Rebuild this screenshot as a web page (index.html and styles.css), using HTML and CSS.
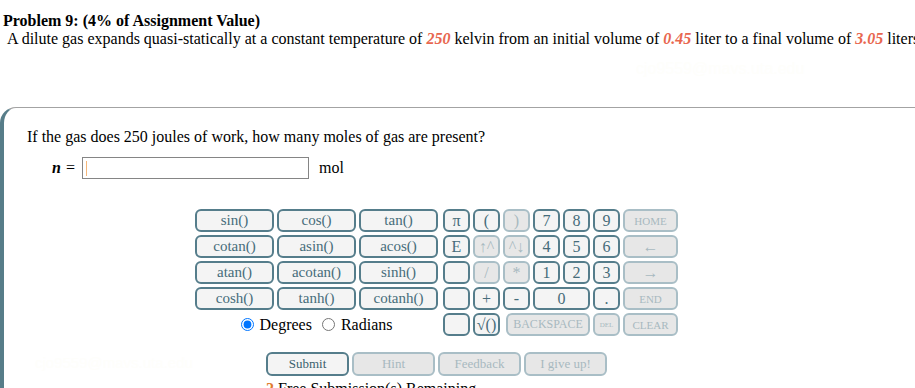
FILE: index.html
```html
<!DOCTYPE html>
<html lang="en">
<head>
    <meta charset="UTF-8">
    <meta name="viewport" content="width=device-width, initial-scale=1.0">
    <title>Problem 9</title>
    <link rel="stylesheet" href="styles.css">
</head>
<body>
    <div class="problem-head">
        <div class="problem-title">Problem 9: (4% of Assignment Value)</div>
        <div class="problem-text">A dilute gas expands quasi-statically at a constant temperature of <span class="var">250</span> kelvin from an initial volume of <span class="var">0.45</span> liter to a final volume of <span class="var">3.05</span> liters.</div>
    </div>

    <div class="part">
        <div class="question">If the gas does 250 joules of work, how many moles of gas are present?</div>
        <div class="answer-row">
            <span class="symbol">n</span>
            <span class="eq">=</span>
            <input type="text" class="answer-input">
            <span class="unit">mol</span>
        </div>

        <div class="keypad">
            <div class="funcs">
                <div class="func-grid">
                    <button class="key">sin()</button>
                    <button class="key">cos()</button>
                    <button class="key">tan()</button>
                    <button class="key">cotan()</button>
                    <button class="key">asin()</button>
                    <button class="key">acos()</button>
                    <button class="key">atan()</button>
                    <button class="key">acotan()</button>
                    <button class="key">sinh()</button>
                    <button class="key">cosh()</button>
                    <button class="key">tanh()</button>
                    <button class="key">cotanh()</button>
                </div>
                <div class="angle-row">
                    <label><input type="radio" name="angle" checked>Degrees</label>
                    <label><input type="radio" name="angle">Radians</label>
                </div>
            </div>
            <div class="num-grid">
                <button class="key">π</button>
                <button class="key">(</button>
                <button class="key off">)</button>
                <button class="key">7</button>
                <button class="key">8</button>
                <button class="key">9</button>
                <button class="key off small">HOME</button>

                <button class="key">E</button>
                <button class="key off">↑^</button>
                <button class="key off">^↓</button>
                <button class="key">4</button>
                <button class="key">5</button>
                <button class="key">6</button>
                <button class="key off">←</button>

                <button class="key"></button>
                <button class="key off">/</button>
                <button class="key off">*</button>
                <button class="key">1</button>
                <button class="key">2</button>
                <button class="key">3</button>
                <button class="key off">→</button>

                <button class="key"></button>
                <button class="key">+</button>
                <button class="key">-</button>
                <button class="key wide">0</button>
                <button class="key">.</button>
                <button class="key off small">END</button>

                <button class="key"></button>
                <button class="key">√()</button>
                <button class="key off small backspace">BACKSPACE</button>
                <button class="key off tiny">DEL</button>
                <button class="key off small">CLEAR</button>
            </div>
        </div>

        <div class="actions">
            <button class="act">Submit</button>
            <button class="act off">Hint</button>
            <button class="act off">Feedback</button>
            <button class="act off">I give up!</button>
        </div>
        <div class="remaining"><span class="count">2</span> Free Submission(s) Remaining</div>
    </div>

    <span class="mark mark-top">cjo9559@mavs.uta.edu</span>
    <span class="mark mark-bottom">cjo9559@mavs.uta.edu</span>
</body>
</html>
```

FILE: styles.css
```css
body {
    margin: 0;
    font-family: "Liberation Serif", "Times New Roman", serif;
    font-size: 16px;
    color: #000;
    background: #fff;
    overflow: hidden;
}

.problem-head {
    padding-top: 12px;
    line-height: 18px;
    white-space: nowrap;
}
.problem-title {
    font-weight: bold;
    padding-left: 3px;
}
.problem-text {
    padding-left: 7px;
}
.var {
    color: #e8674f;
    font-weight: bold;
    font-style: italic;
}

/* question box, runs off the right side of the page */
.part {
    margin-top: 59px;
    width: 1100px;
    border-top: 1px solid #a3a3a3;
    border-left: 4px solid #577d89;
    border-top-left-radius: 16px;
    padding: 20px 0 40px 23px;
    line-height: 18px;
}

.answer-row {
    display: flex;
    align-items: center;
    height: 22px;
    margin-top: 11px;
    padding-left: 25px;
}
.symbol {
    font-style: italic;
    font-weight: bold;
    width: 14px;
}
.eq {
    width: 16px;
}
.answer-input {
    box-sizing: border-box;
    width: 227px;
    height: 22px;
    margin: 0;
    border: 1px solid #858585;
    background: linear-gradient(#f6b77a, #f6b77a) no-repeat 3px 3px / 1px 15px, #fff;
}
.unit {
    margin-left: 10px;
}

.keypad {
    display: flex;
    margin-top: 30px;
    margin-left: 168px;
}
.func-grid {
    display: grid;
    grid-template-columns: repeat(3, 79px);
    grid-auto-rows: 23px;
    gap: 3px;
}
.angle-row {
    display: flex;
    justify-content: center;
    align-items: center;
    height: 23px;
    margin-top: 3px;
}
.angle-row label {
    display: flex;
    align-items: center;
    margin: 0 5px;
}
.angle-row input {
    margin: 0 6px 0 0;
}
.num-grid {
    display: grid;
    grid-template-columns: repeat(6, 27px) 55px;
    grid-auto-rows: 23px;
    gap: 3px;
    margin-left: 5px;
}

.key {
    box-sizing: border-box;
    display: flex;
    align-items: center;
    justify-content: center;
    padding: 0;
    border: 2px solid #557d8b;
    border-radius: 6px;
    background: #f4f4f4;
    color: #466c7a;
    font-family: "Liberation Serif", "Times New Roman", serif;
    font-size: 15px;
}
.num-grid .key {
    font-size: 16px;
}
.key.off {
    border-color: #a9bec6;
    background: #e7e7e7;
    color: #a7b9c0;
}
.num-grid .key.small {
    font-size: 11px;
}
.num-grid .key.tiny {
    font-size: 7px;
}
.key.wide {
    grid-column: span 2;
}
.num-grid .key.backspace {
    grid-column: span 3;
    margin-left: 3px;
    font-size: 12px;
}

.actions {
    display: flex;
    gap: 3px;
    margin-top: 16px;
    margin-left: 239px;
}
.act {
    box-sizing: border-box;
    width: 83px;
    height: 24px;
    padding: 0;
    border: 2px solid #557d8b;
    border-radius: 6px;
    background: #f4f4f4;
    color: #3b5f6d;
    font-family: "Liberation Serif", "Times New Roman", serif;
    font-size: 13px;
}
.act.off {
    border-color: #a9bec6;
    background: #e7e7e7;
    color: #a7b9c0;
}

.remaining {
    margin-top: 4px;
    margin-left: 239px;
}
.count {
    color: #e07b2e;
    font-weight: bold;
}

/* faint user watermark over the page */
.mark {
    position: absolute;
    font-family: "Liberation Sans", Arial, sans-serif;
    font-size: 15px;
    color: #fefefb;
}
.mark-top {
    left: 636px;
    top: 60px;
    font-size: 16px;
}
.mark-bottom {
    left: 35px;
    top: 354px;
}
```
